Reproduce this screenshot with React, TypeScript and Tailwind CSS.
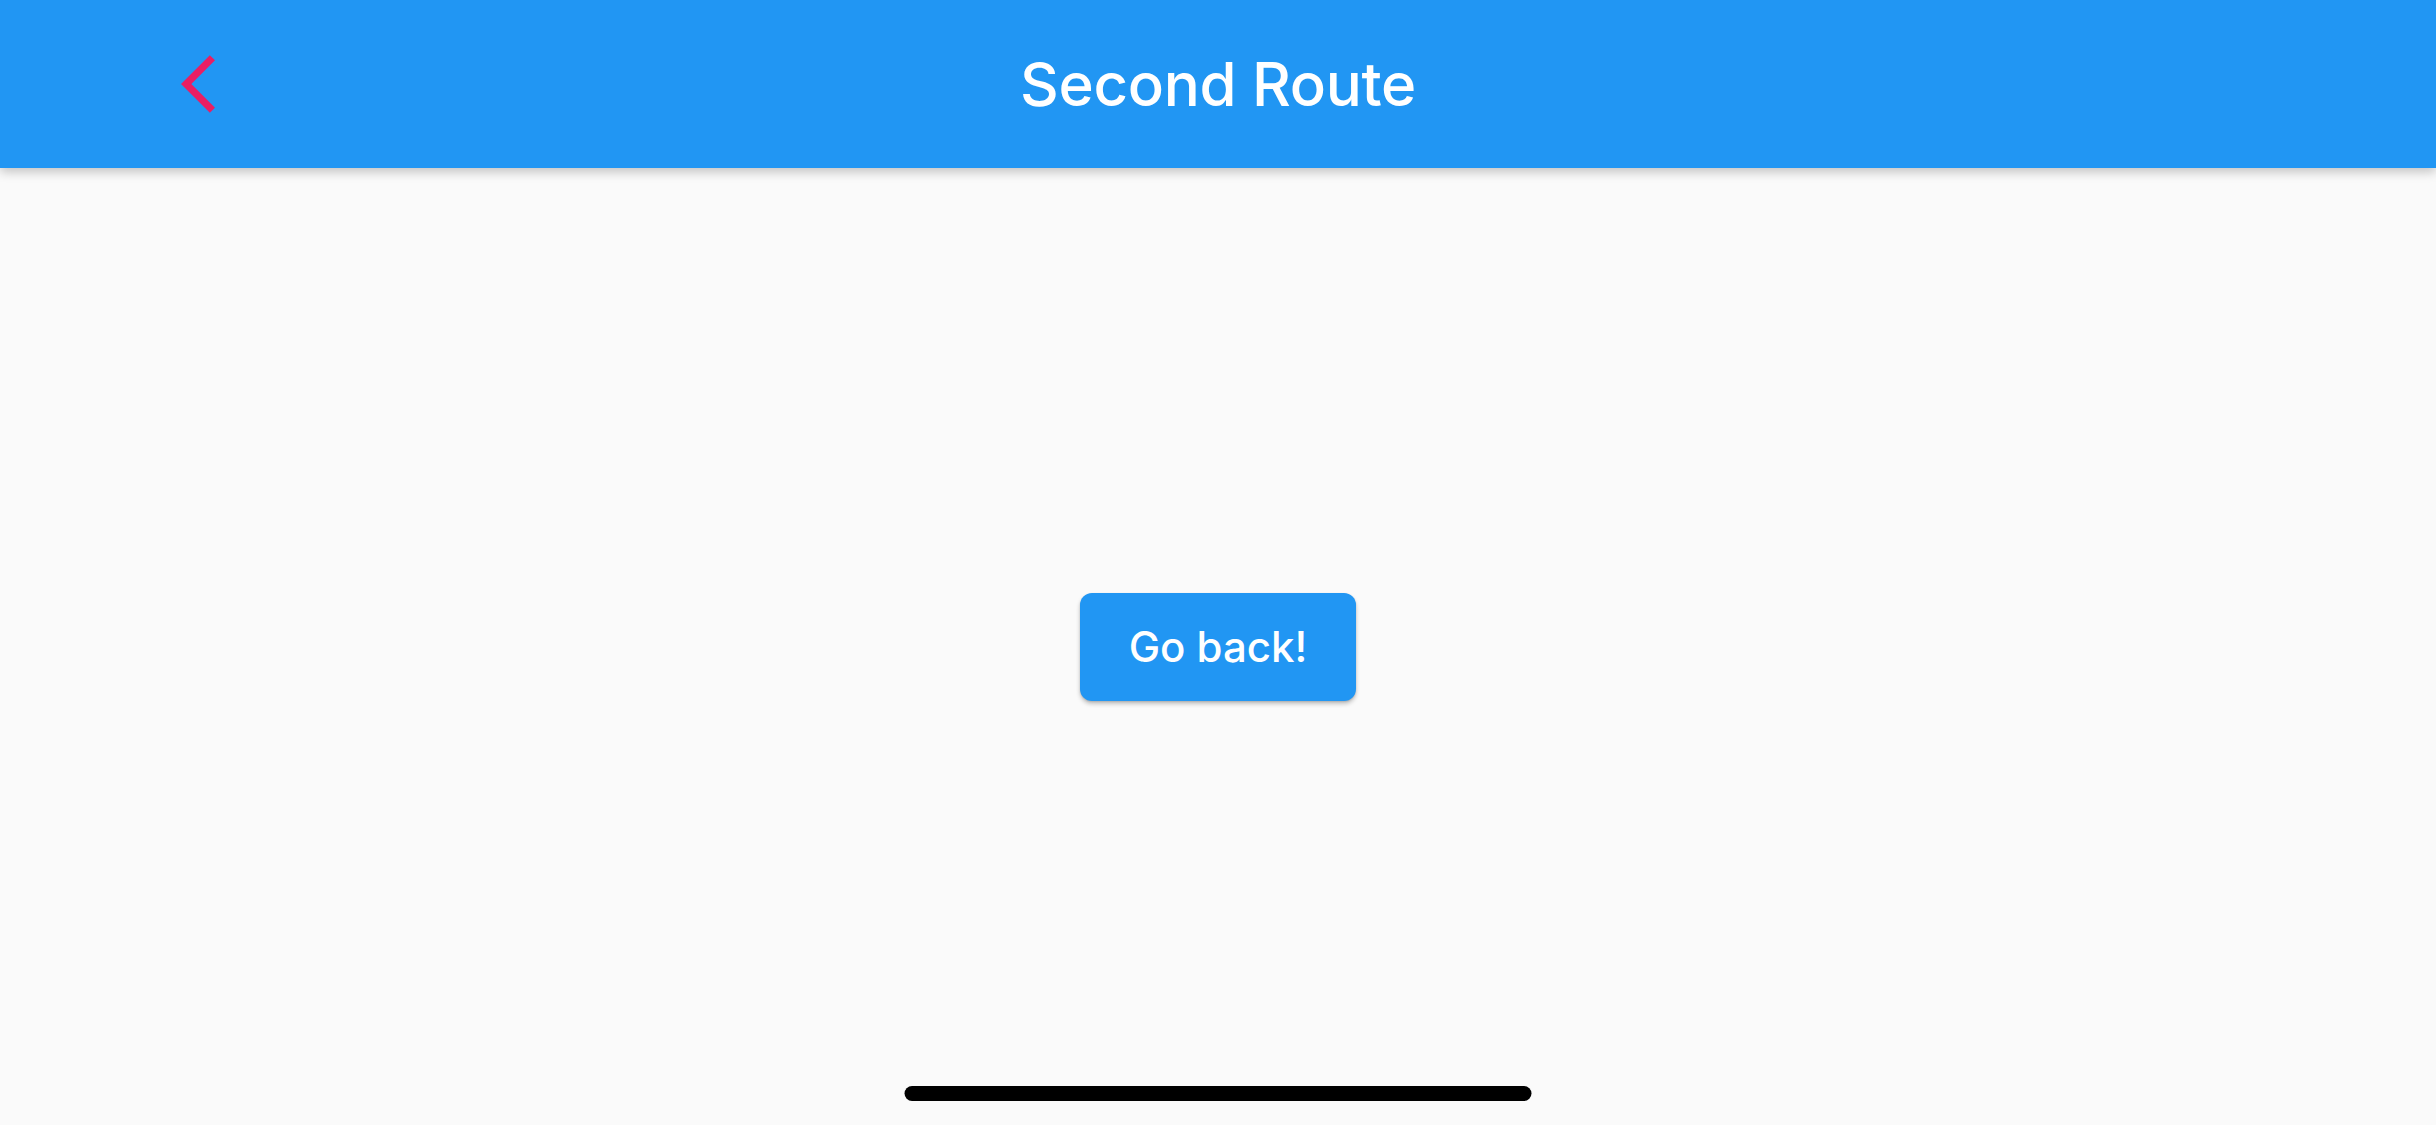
import React from "react";

/** iOS-style back chevron, same outline as Material's arrow_back_ios */
function BackChevron() {
  return (
    <svg
      viewBox="5.84 2.1 11.67 19.8"
      className="w-[34px] h-[58px]"
      aria-hidden="true"
    >
      <path
        d="M17.51 3.87L15.73 2.1 5.84 12l9.9 9.9 1.77-1.77L9.38 12l8.13-8.13z"
        fill="#E91E63"
      />
    </svg>
  );
}

export default function App() {
  return (
    <div
      className="relative h-[1125px] w-full flex flex-col bg-[#fafafa] overflow-hidden"
      style={{ fontFamily: "Inter, 'Noto Sans', sans-serif" }}
    >
      {/* App bar */}
      <header className="relative z-10 h-[168px] shrink-0 bg-[#2196F3] shadow-[0_4px_10px_rgba(0,0,0,0.22)] grid grid-cols-[1fr_auto_1fr] items-center">
        <div className="pl-[181px] flex items-center">
          <button aria-label="Back" className="flex items-center">
            <BackChevron />
          </button>
        </div>
        <h1 className="text-white text-[60px] font-medium leading-none tracking-[-0.3px]">
          Second Route
        </h1>
        <div />
      </header>

      {/* Body */}
      <main className="flex-1 flex items-center justify-center">
        <button className="w-[276px] h-[108px] rounded-[12px] bg-[#2196F3] text-white text-[42px] font-medium leading-none shadow-[0_3px_4px_rgba(0,0,0,0.22),0_1px_2px_rgba(0,0,0,0.12)]">
          Go back!
        </button>
      </main>

      {/* Home indicator */}
      <div className="absolute bottom-[24px] left-1/2 -translate-x-1/2 w-[627px] h-[15px] rounded-full bg-black" />
    </div>
  );
}
